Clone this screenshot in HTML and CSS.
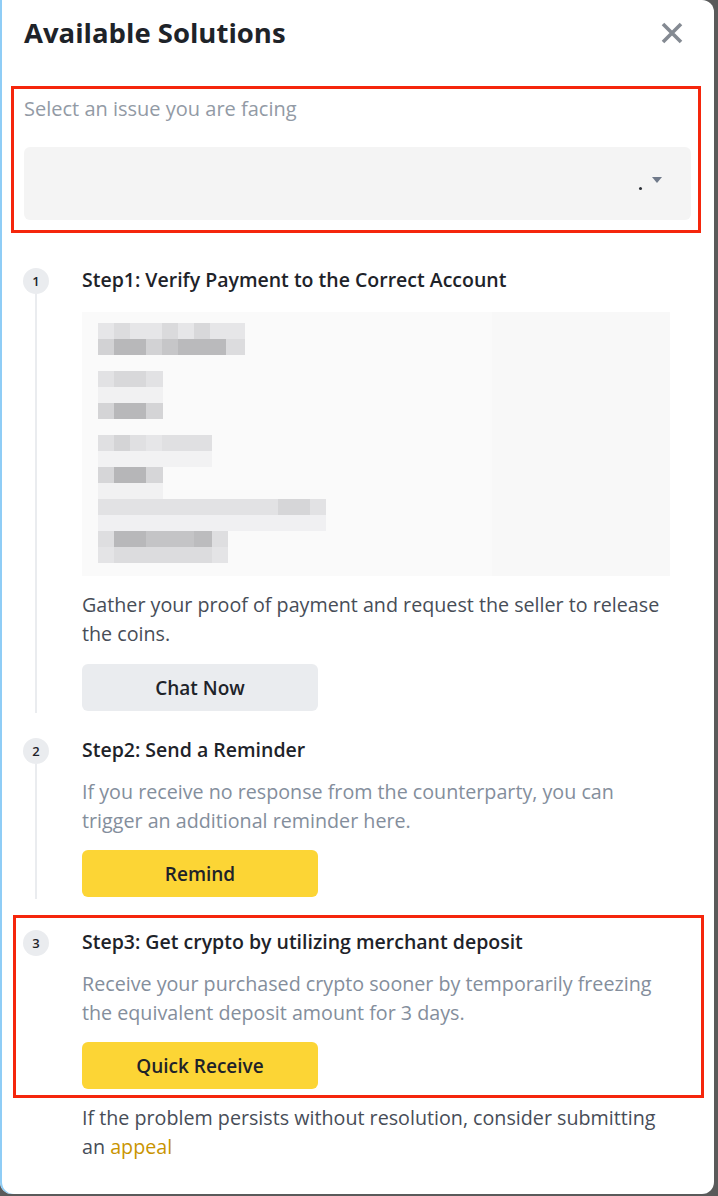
FILE: index.html
```html
<!DOCTYPE html>
<html lang="en">
<head>
<meta charset="utf-8">
<title>Available Solutions</title>
<link rel="stylesheet" href="styles.css">
</head>
<body>
<div class="card">
  <header class="header">
    <h1 class="title">Available Solutions</h1>
    <button class="close" aria-label="Close">
      <svg width="24" height="24" viewBox="0 0 24 24"><path d="M3 3 L21 21 M21 3 L3 21" stroke="#848a92" stroke-width="3.6" stroke-linecap="butt" fill="none"/></svg>
    </button>
  </header>

  <section class="issue-box">
    <div class="issue-label">Select an issue you are facing</div>
    <div class="select">
      <span class="select-dot"></span>
      <svg class="select-caret" width="10" height="7" viewBox="0 0 10 7"><path d="M0 0 H10 L5 6 Z" fill="#707a8a"/></svg>
    </div>
  </section>

  <div class="steps">
    <div class="step step-1">
      <div class="rail"><span class="num">1</span><span class="line"></span></div>
      <div class="content">
        <h2 class="step-title">Step1: Verify Payment to the Correct Account</h2>
        <svg class="mosaic" width="588" height="264" viewBox="0 0 588 264">
          <rect x="0" y="0" width="588" height="264" fill="#f8f8f8"/>
          <rect x="0" y="0" width="410" height="264" fill="#fafafa"/>
          <rect x="16" y="11" width="147" height="16" fill="#e6e6e8"/>
          <rect x="32" y="11" width="16" height="16" fill="#dcdcde"/>
          <rect x="80" y="11" width="16" height="16" fill="#dadadc"/>
          <rect x="112" y="11" width="16" height="16" fill="#d8d8da"/>
          <rect x="16" y="27" width="147" height="16" fill="#d2d2d4"/>
          <rect x="32" y="27" width="32" height="16" fill="#b8b8ba"/>
          <rect x="80" y="27" width="16" height="16" fill="#c6c6c8"/>
          <rect x="96" y="27" width="48" height="16" fill="#bababc"/>
          <rect x="144" y="27" width="19" height="16" fill="#dcdcde"/>
          <rect x="16" y="59" width="65" height="16" fill="#e2e2e4"/>
          <rect x="32" y="59" width="32" height="16" fill="#d8d8da"/>
          <rect x="16" y="75" width="65" height="16" fill="#f1f1f2"/>
          <rect x="16" y="91" width="65" height="16" fill="#d4d4d6"/>
          <rect x="32" y="91" width="32" height="16" fill="#b8b8ba"/>
          <rect x="16" y="123" width="114" height="16" fill="#e0e0e2"/>
          <rect x="32" y="123" width="16" height="16" fill="#d4d4d6"/>
          <rect x="64" y="123" width="16" height="16" fill="#e6e6e8"/>
          <rect x="16" y="139" width="114" height="16" fill="#f2f2f3"/>
          <rect x="16" y="155" width="65" height="16" fill="#d6d6d8"/>
          <rect x="32" y="155" width="32" height="16" fill="#b6b6b8"/>
          <rect x="16" y="171" width="65" height="16" fill="#f1f1f2"/>
          <rect x="16" y="187" width="228" height="16" fill="#e2e2e4"/>
          <rect x="196" y="187" width="32" height="16" fill="#d6d6d8"/>
          <rect x="16" y="203" width="228" height="16" fill="#f0f0f2"/>
          <rect x="16" y="219" width="130" height="16" fill="#dedee0"/>
          <rect x="32" y="219" width="32" height="16" fill="#b8b8ba"/>
          <rect x="64" y="219" width="48" height="16" fill="#c4c4c6"/>
          <rect x="112" y="219" width="18" height="16" fill="#bcbcbe"/>
          <rect x="16" y="235" width="130" height="16" fill="#e4e4e6"/>
          <rect x="32" y="235" width="98" height="16" fill="#dcdcde"/>
        </svg>
        <p class="desc dark">Gather your proof of payment and request the seller to release the coins.</p>
        <button class="btn btn-gray">Chat Now</button>
      </div>
    </div>

    <div class="step step-2">
      <div class="rail"><span class="num">2</span><span class="line"></span></div>
      <div class="content">
        <h2 class="step-title">Step2: Send a Reminder</h2>
        <p class="desc light">If you receive no response from the counterparty, you can trigger an additional reminder here.</p>
        <button class="btn btn-yellow">Remind</button>
      </div>
    </div>
  </div>

  <section class="highlight">
    <div class="step step-3">
      <div class="rail"><span class="num">3</span></div>
      <div class="content">
        <h2 class="step-title">Step3: Get crypto by utilizing merchant deposit</h2>
        <p class="desc light">Receive your purchased crypto sooner by temporarily freezing the equivalent deposit amount for 3 days.</p>
        <button class="btn btn-yellow">Quick Receive</button>
      </div>
    </div>
  </section>

  <p class="footer-note">If the problem persists without resolution, consider submitting an <a class="appeal" href="#">appeal</a></p>
</div>
</body>
</html>
```

FILE: styles.css
```css
* { box-sizing: border-box; }

html, body {
  margin: 0;
  padding: 0;
}

body {
  background: #5a5a5a;
  width: 718px;
  height: 1196px;
  overflow: hidden;
  font-family: "Open Sans", "Noto Sans", Arial, sans-serif;
  color: #1e2329;
}

.card {
  width: 714px;
  height: 1194px;
  background: #ffffff;
  border-radius: 0 12px 12px 12px;
  box-shadow: inset 2px 0 0 #8fcdf6;
  overflow: hidden;
}

.header {
  display: flex;
  align-items: center;
  justify-content: space-between;
  padding: 16px 30px 0 24px;
  height: 50px;
}

.title {
  margin: 0;
  font-size: 27.5px;
  line-height: 34px;
  font-weight: 700;
  color: #1e2329;
  letter-spacing: 0;
}

.close {
  border: 0;
  background: none;
  padding: 0;
  width: 24px;
  height: 24px;
  display: flex;
}

.issue-box {
  margin: 36px 0 0 11px;
  width: 690px;
  border: 3px solid #f5260c;
  padding: 7px 7px 10px 10px;
}

.issue-label {
  font-size: 20px;
  line-height: 26px;
  color: #929aa5;
}

.select {
  margin-top: 25px;
  height: 73px;
  background: #f4f4f4;
  border-radius: 6px;
  display: flex;
  align-items: center;
  justify-content: flex-end;
  padding-right: 29px;
  gap: 10px;
}

.select-dot {
  width: 3px;
  height: 3px;
  border-radius: 50%;
  background: #2b2f36;
  margin-top: 10px;
}

.select-caret {
  margin-top: -6px;
}

.steps {
  margin-top: 33px;
  padding-left: 23px;
}

.step {
  display: flex;
  gap: 33px;
}

.step-1 { padding-bottom: 25px; }
.step-2 { padding-bottom: 8px; }

.rail {
  width: 26px;
  flex: none;
  display: flex;
  flex-direction: column;
  align-items: center;
}

.num {
  width: 26px;
  height: 26px;
  flex: none;
  border-radius: 50%;
  background: #eaecef;
  font-size: 13px;
  font-weight: 600;
  line-height: 26px;
  text-align: center;
  color: #1e2329;
  margin-top: 2px;
}

.line {
  flex: 1;
  width: 2px;
  background: #eaecef;
  margin-bottom: -2px;
}

.content {
  flex: 1;
  min-width: 0;
  padding-right: 40px;
}

.step-title {
  margin: 0;
  font-size: 19.5px;
  line-height: 28px;
  font-weight: 600;
  color: #1e2329;
}

.mosaic {
  display: block;
  margin-top: 18px;
}

.desc {
  margin: 13px 0 0;
  font-size: 19.7px;
  line-height: 29px;
}

.step-1 .desc { margin-top: 14px; }

.desc.dark { color: #474d57; }
.desc.light { color: #848e9c; }

.btn {
  display: block;
  margin-top: 15px;
  width: 236px;
  height: 47px;
  border: 0;
  border-radius: 6px;
  font-family: inherit;
  font-size: 19px;
  font-weight: 600;
  color: #1e2329;
}

.btn-gray { background: #eaecef; margin-top: 16px; }
.btn-yellow { background: #fcd535; }

.highlight {
  margin: 10px 0 0 13px;
  width: 691px;
  border: 3px solid #f5260c;
  padding: 10px 0 6px 7px;
}

.footer-note {
  margin: 5px 40px 0 82px;
  font-size: 19.7px;
  line-height: 29px;
  color: #474d57;
}

.appeal {
  color: #c99400;
  text-decoration: none;
}
```
